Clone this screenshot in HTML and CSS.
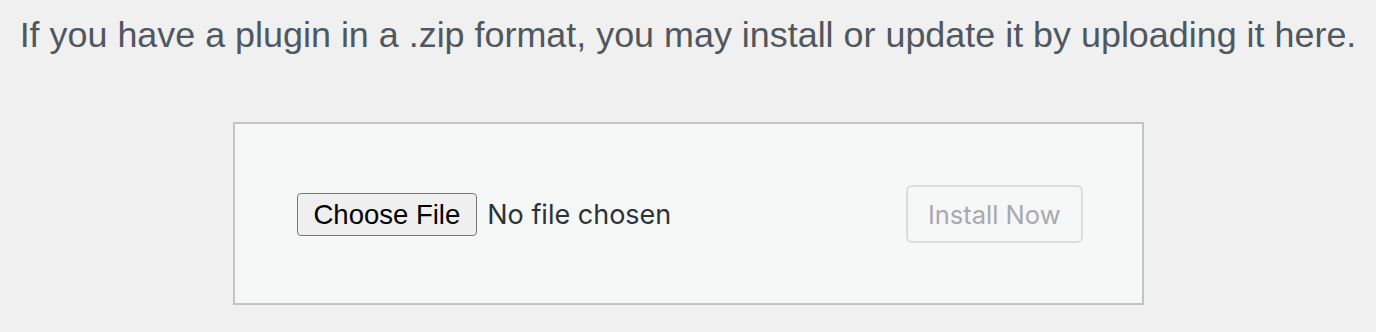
FILE: index.html
```html
<!DOCTYPE html>
<html lang="en">
<head>
    <meta charset="UTF-8">
    <meta name="viewport" content="width=device-width, initial-scale=1.0">
    <title>Upload Plugin</title>
    <link rel="stylesheet" href="styles.css">
</head>
<body>
    <div class="upload-plugin">
        <p class="install-help">If you have a plugin in a .zip format, you may install or update it by uploading it here.</p>
        <form class="upload-form" onsubmit="return false;">
            <label class="file-picker">
                <input type="file" class="file-input" accept=".zip">
                <span class="file-btn">Choose File</span>
                <span class="file-name">No file chosen</span>
            </label>
            <button type="submit" class="btn" disabled>Install Now</button>
        </form>
    </div>
</body>
</html>
```
FILE: styles.css
```css
body {
    margin: 0;
    padding: 0;
    background-color: #f0f0f1;
    color: #50575e;
    font-family: "Liberation Sans", Arial, sans-serif;
}
.install-help {
    margin: 0;
    padding-top: 10px;
    font-size: 35.9px;
    line-height: 50px;
    text-align: center;
    white-space: nowrap;
}
.upload-form {
    display: flex;
    justify-content: space-between;
    align-items: center;
    box-sizing: border-box;
    width: 911px;
    margin: 62px auto 0;
    padding: 61px 59px 60px 62px;
    background: #f6f7f7;
    border: 2px solid #c3c4c7;
}
.file-picker {
    display: flex;
    align-items: center;
    gap: 10px;
    cursor: pointer;
}
.file-input {
    display: none;
}
.file-btn {
    box-sizing: border-box;
    height: 43px;
    padding: 0 16px;
    font-size: 27.5px;
    line-height: 41px;
    color: #000;
    background: #efefef;
    border: 1px solid #767676;
    border-radius: 4px;
}
.file-name {
    font-family: Inter, "Liberation Sans", sans-serif;
    font-size: 27px;
    color: #2c3338;
}
.btn {
    box-sizing: border-box;
    height: 58px;
    padding: 0 20px;
    font-family: Inter, "Liberation Sans", sans-serif;
    font-size: 25.5px;
    color: #a7aaad;
    background: #f6f7f7;
    border: 2px solid #dcdcde;
    border-radius: 6px;
    cursor: default;
}
```
